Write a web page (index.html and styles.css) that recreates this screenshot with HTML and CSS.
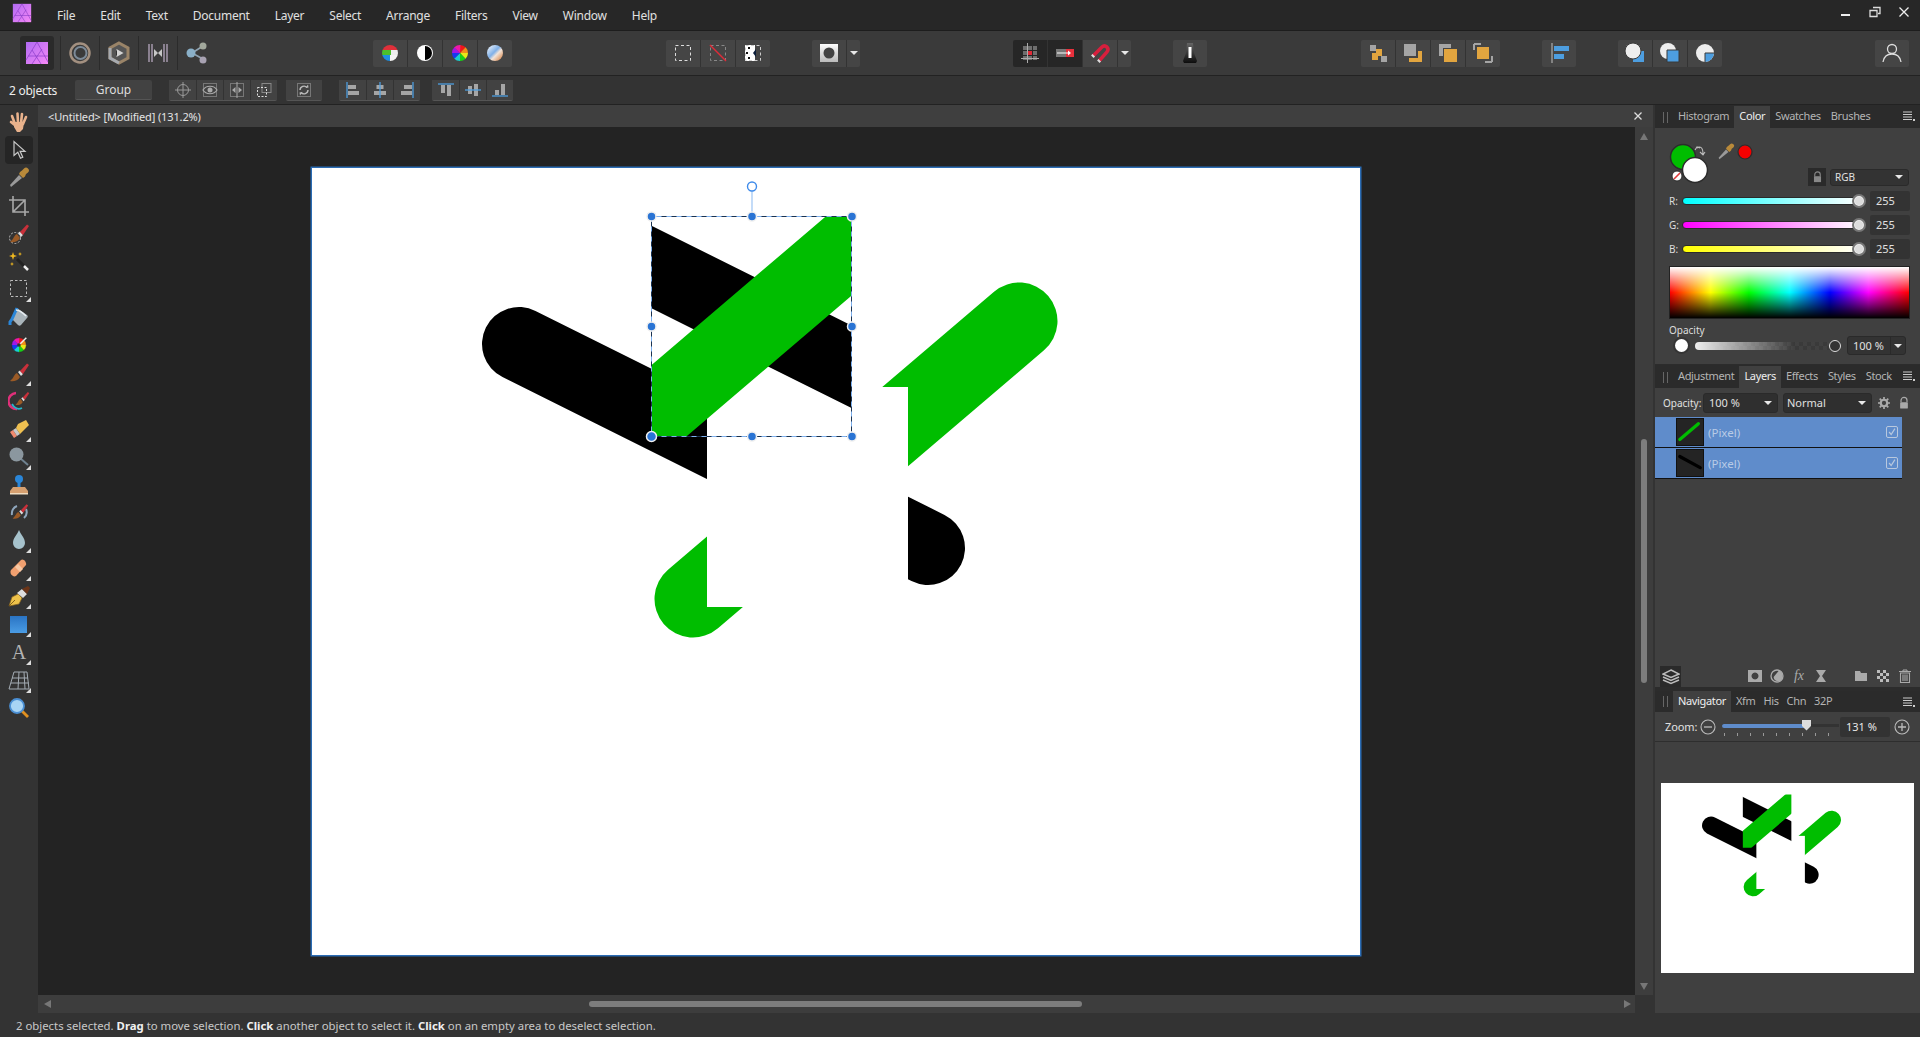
FILE: index.html
```html
<!DOCTYPE html>
<html lang="en">
<head>
<meta charset="utf-8">
<title>Affinity Photo</title>
<link rel="stylesheet" href="styles.css">
</head>
<body>
<svg class="defs" xmlns="http://www.w3.org/2000/svg">
  <defs>
    <linearGradient id="lg-logo" x1="0" y1="0" x2="1" y2="1"><stop offset="0" stop-color="#b06af2"/><stop offset="1" stop-color="#f688f6"/></linearGradient>
    <linearGradient id="lg-tone" x1="0" y1="0" x2="1" y2="1"><stop offset="0" stop-color="#ffffff"/><stop offset=".45" stop-color="#7fb0e8"/><stop offset=".6" stop-color="#f3e4d8"/><stop offset="1" stop-color="#d2722c"/></linearGradient>
    <linearGradient id="lg-mask" x1="0" y1="0" x2="0" y2="1"><stop offset="0" stop-color="#fff"/><stop offset="1" stop-color="#bbb"/></linearGradient>
    <linearGradient id="lg-rect" x1="0" y1="0" x2="0" y2="1"><stop offset="0" stop-color="#2a74c4"/><stop offset="1" stop-color="#4a9ce4"/></linearGradient>
    <linearGradient id="lg-lift" x1="0" y1="0" x2="0" y2="1"><stop offset="0" stop-color="#666"/><stop offset="1" stop-color="#0c0c0c"/></linearGradient>
    <clipPath id="cp-c"><circle cx="12" cy="12" r="8"/></clipPath>
    <clipPath id="cp-piece"><rect x="707" y="387" width="201" height="220"/></clipPath>
  </defs>

  <symbol id="logo" viewBox="0 0 24 24">
    <rect x="1" y="1" width="22" height="22" fill="url(#lg-logo)"/>
    <path d="M12 1 1 19M12 1l11 20M3 15h20M7 9l9 14M17 8 7 23" fill="none" stroke="#8a3cc8" stroke-width=".7"/>
  </symbol>
  <symbol id="art" viewBox="312 168 1048 787">
    <rect x="312" y="168" width="1048" height="787" fill="#fff"/>
    <path d="M519 344 928 548" stroke="#000" stroke-width="74" stroke-linecap="round" fill="none"/>
    <path d="M693 599 1019 321" stroke="#00bd00" stroke-width="77" stroke-linecap="round" fill="none"/>
    <rect x="707" y="387" width="201" height="220" fill="#fff"/>
    <g transform="translate(-56 -171)">
      <g clip-path="url(#cp-piece)">
        <path d="M519 344 928 548" stroke="#000" stroke-width="74" stroke-linecap="round" fill="none"/>
        <path d="M693 599 1019 321" stroke="#00bd00" stroke-width="77" stroke-linecap="round" fill="none"/>
      </g>
    </g>
  </symbol>
  <symbol id="wheel" viewBox="0 0 24 24">
    <g fill="none" stroke-width="8" stroke-dasharray="3.300 22">
      <circle cx="12" cy="12" r="4" stroke="#f01818" pathLength="25" transform="rotate(-90 12 12)"/>
      <circle cx="12" cy="12" r="4" stroke="#f09018" pathLength="25" transform="rotate(-45 12 12)"/>
      <circle cx="12" cy="12" r="4" stroke="#e8e818" pathLength="25" transform="rotate(0 12 12)"/>
      <circle cx="12" cy="12" r="4" stroke="#18d018" pathLength="25" transform="rotate(45 12 12)"/>
      <circle cx="12" cy="12" r="4" stroke="#18d0d0" pathLength="25" transform="rotate(90 12 12)"/>
      <circle cx="12" cy="12" r="4" stroke="#1838f0" pathLength="25" transform="rotate(135 12 12)"/>
      <circle cx="12" cy="12" r="4" stroke="#a018e8" pathLength="25" transform="rotate(180 12 12)"/>
      <circle cx="12" cy="12" r="4" stroke="#f018a8" pathLength="25" transform="rotate(225 12 12)"/>
    </g>
  </symbol>
  <symbol id="dropper" viewBox="0 0 22 22">
    <path d="M3 20 2 18 11 8l3 3z" fill="#9a9a9a"/>
    <path d="M11 7l4 4 2-1.500 1-2.500 2-1.500a2.500 2.500 0 0 0-4-4L14 3.500 12 5z" fill="#b98a3a"/>
  </symbol>
  <symbol id="brushhead" viewBox="0 0 22 22">
    <path d="M2 19c3 1 8 0 10-4l-3-4c-3 1-3 5-7 8z" fill="#9a5a26"/>
    <path d="m10 10 3 4 2-2-3-3.500z" fill="#ddd"/>
    <path d="m12 9 3 3 6-9-2-1.500z" fill="#c9303a"/>
  </symbol>
</svg>

<div class="app">
  <header class="menubar">
    <svg class="applogo"><use href="#logo"/></svg>
    <nav class="menu">
      <span>File</span><span>Edit</span><span>Text</span><span>Document</span><span>Layer</span><span>Select</span><span>Arrange</span><span>Filters</span><span>View</span><span>Window</span><span>Help</span>
    </nav>
    <div class="winctl">
      <svg viewBox="0 0 12 12"><path d="M1 8h9v2H1z" fill="#eee"/></svg>
      <svg viewBox="0 0 12 12"><path d="M4 1.500h7v6H9M1 4.500h7v6H1z" fill="none" stroke="#ddd" stroke-width="1.300"/></svg>
      <svg viewBox="0 0 12 12"><path d="m1.500 1.500 9 9m0-9-9 9" stroke="#eee" stroke-width="1.300"/></svg>
    </div>
  </header>

  <section class="toolbar">
    <div class="persona active"><svg class="i24"><use href="#logo"/></svg></div>
    <div class="persona"><svg class="i24" viewBox="0 0 24 24"><circle cx="12" cy="12" r="9.500" fill="none" stroke="#a39080" stroke-width="2.500"/><circle cx="12.500" cy="12" r="6" fill="none" stroke="#7c8a98" stroke-width="2"/></svg></div>
    <div class="persona"><svg class="i24" viewBox="0 0 24 24"><path d="m12 2 9 5v10l-9 5-9-5V7z" fill="#555" stroke="#9a8468" stroke-width="3"/><path d="M3 7v10l9 5" fill="none" stroke="#a6aab0" stroke-width="3"/><path d="m9.500 8 7 4-7 4z" fill="#d4d4d4"/><path d="M9.500 9.500v5" stroke="#333" stroke-width="1"/></svg></div>
    <div class="persona"><svg class="i24" viewBox="0 0 24 24"><path d="M3 3v18M6 3v18M18 3v18M21 3v18" stroke="#9f93a6" stroke-width="1.600"/><path d="m8 8 4 4-4 4zM16 8l-4 4 4 4z" fill="#c7c7c7"/></svg></div>
    <div class="persona"><svg class="i24" viewBox="0 0 24 24"><path d="M7 12 18 5M7 12l11 6" stroke="#8fa3b2" stroke-width="1.600"/><circle cx="6" cy="12" r="4.500" fill="#8ab0c8"/><circle cx="18" cy="5" r="3.500" fill="#a2a89c"/><circle cx="18" cy="19" r="3.500" fill="#a8a2b2"/></svg></div>

    <div class="group g-color">
      <button class="tbtn"><svg class="i24" viewBox="0 0 24 24"><g clip-path="url(#cp-c)"><path d="M4 4h16v5H4z" fill="#e0303a"/><path d="M4 9h9v5H4z" fill="#4cc02c"/><path d="M13 9h7v5h-7z" fill="#eee"/><path d="M4 14h8v6H4z" fill="#1f8fe0"/><path d="M12 14h8v6h-8z" fill="#f4f4f4"/></g></svg></button>
      <button class="tbtn"><svg class="i24" viewBox="0 0 24 24"><circle cx="12" cy="12" r="8" fill="#fff"/><path d="M12 5a7 7 0 0 1 0 14z" fill="#000"/></svg></button>
      <button class="tbtn"><svg class="i24"><use href="#wheel"/></svg></button>
      <button class="tbtn"><svg class="i24" viewBox="0 0 24 24"><circle cx="12" cy="12" r="8" fill="url(#lg-tone)"/></svg></button>
    </div>

    <div class="group g-sel">
      <button class="tbtn"><svg class="i24" viewBox="0 0 24 24"><rect x="4.500" y="4.500" width="15" height="15" fill="none" stroke="#ddd" stroke-dasharray="3 2.500"/></svg></button>
      <button class="tbtn"><svg class="i24" viewBox="0 0 24 24"><rect x="4.500" y="4.500" width="15" height="15" fill="none" stroke="#888" stroke-dasharray="3 2.500"/><path d="m4 4 16 16" stroke="#e02a38" stroke-width="1.500"/></svg></button>
      <button class="tbtn"><svg class="i24" viewBox="0 0 24 24"><path d="M4 4h10v16H4z" fill="#fff"/><rect x="4.500" y="4.500" width="15" height="15" fill="none" stroke="#ccc" stroke-dasharray="3 2.500"/><path d="M7 6h2v2H7zM7 16h2v2H7zM5 11h2v2H5z" fill="#111"/><path d="M15 8v8l-3-4z" fill="#0c1e3a"/></svg></button>
    </div>

    <div class="group g-mask">
      <button class="tbtn"><svg class="i24" viewBox="0 0 24 24"><rect x="3" y="3" width="18" height="18" fill="url(#lg-mask)"/><circle cx="12" cy="12" r="5.500" fill="#444"/></svg></button>
      <button class="tbtn drop"><i class="caret"></i></button>
    </div>

    <div class="group g-snap">
      <button class="tbtn on"><svg class="i24" viewBox="0 0 24 24"><path d="M5 5h4v4H5zM10 5h4v4h-4zM15 5h4v4h-4zM5 10h4v4H5zM15 10h4v4h-4zM5 15h4v4H5zM10 15h4v4h-4zM15 15h4v4h-4z" fill="#6e6e6e"/><path d="M10 10h4v4h-4z" fill="#e02a38"/><path d="M9.500 2v20M3 17.500h18" stroke="#aaa"/></svg></button>
      <button class="tbtn on"><svg class="i24" viewBox="0 0 24 24"><rect x="3" y="8" width="10" height="8" fill="#777"/><rect x="13" y="8" width="8" height="8" fill="#e8303c"/><path d="M4 12h12" stroke="#fff" stroke-width="1.200"/><path d="m15 9.500 3 2.500-3 2.500z" fill="#fff"/></svg></button>
      <button class="tbtn"><svg class="i24" viewBox="0 0 24 24"><path d="M5 15 14 6c3-3 8 1 5 5l-8 9" fill="none" stroke="#d81f3d" stroke-width="3.500"/><path d="m3.800 13.800 2.500 2.500M9.800 18.800l2.500 2.500" stroke="#ddd" stroke-width="2"/></svg></button>
      <button class="tbtn drop"><i class="caret"></i></button>
    </div>

    <div class="group g-lift">
      <button class="tbtn"><svg class="i24" viewBox="0 0 24 24"><path d="M9 2h6l1 10 3 8-1 2H6l-1-2 3-8z" fill="url(#lg-lift)"/><rect x="10.500" y="6" width="3" height="11" fill="#fff"/></svg></button>
    </div>

    <div class="group g-order">
      <button class="tbtn"><svg class="i24" viewBox="0 0 24 24"><path d="M4 4h6v6H4zM15 15h6v6h-6z" fill="#a5a5a5"/><path d="M10 8h6v7h-4v4H6v-7h4z" fill="#e2a53f"/></svg></button>
      <button class="tbtn"><svg class="i24" viewBox="0 0 24 24"><path d="M3 3h12v12H3z" fill="#a5a5a5"/><path d="M17 10h4v11H8v-4h9z" fill="#e2a53f"/></svg></button>
      <button class="tbtn"><svg class="i24" viewBox="0 0 24 24"><path d="M3 3h12v4H7v8H3z" fill="#a5a5a5"/><path d="M8 8h13v13H8z" fill="#e2a53f"/></svg></button>
      <button class="tbtn"><svg class="i24" viewBox="0 0 24 24"><path d="M3 3v6M3 3h7M21 21v-6M21 21h-7" stroke="#a5a5a5" stroke-width="2" fill="none"/><path d="M6 6h12v12H6z" fill="#e2a53f"/></svg></button>
    </div>

    <div class="group g-align">
      <button class="tbtn"><svg class="i24" viewBox="0 0 24 24"><path d="M5 2v20" stroke="#999" stroke-width="1.500"/><path d="M7 5h15v5H7zM7 13h10v5H7z" fill="#4d9ee0"/></svg></button>
    </div>

    <div class="group g-bool">
      <button class="tbtn"><svg class="i24" viewBox="0 0 24 24"><path d="M10 10h11v11H10z" fill="#4d9ee0"/><circle cx="10" cy="10" r="8" fill="#eee" stroke="#3a3a3a"/></svg></button>
      <button class="tbtn"><svg class="i24" viewBox="0 0 24 24"><circle cx="10" cy="10" r="8" fill="#eee"/><path d="M9 9h12v12H9z" fill="#4d9ee0" stroke="#3a3a3a"/></svg></button>
      <button class="tbtn"><svg class="i24" viewBox="0 0 24 24"><circle cx="12" cy="12" r="9" fill="#eee"/><path d="M12 12h9a9 9 0 0 1-9 9z" fill="#4d9ee0"/><path d="M12 12h9M12 12v9" stroke="#3a3a3a"/></svg></button>
    </div>

    <div class="group g-user">
      <button class="tbtn"><svg class="i24" viewBox="0 0 24 24"><circle cx="12" cy="8" r="4.500" fill="none" stroke="#ddd" stroke-width="1.300"/><path d="M3 21c1-6 5-8 9-8s8 2 9 8" fill="none" stroke="#ddd" stroke-width="1.300"/></svg></button>
    </div>
  </section>

  <section class="context">
    <span class="ctx-label">2 objects</span>
    <button class="cbtn group-btn">Group</button>
    <div class="cgroup g-c1">
      <button class="cbtn"><svg class="i18" viewBox="0 0 18 18"><circle cx="9" cy="9" r="5.500" fill="none" stroke="#999"/><path d="M9 1v16M1 9h16" stroke="#999"/></svg></button>
      <button class="cbtn"><svg class="i18" viewBox="0 0 18 18"><rect x="2.500" y="2.500" width="13" height="13" fill="none" stroke="#777"/><path d="M2 9c3-5 11-5 14 0-3 5-11 5-14 0z" fill="none" stroke="#aaa" stroke-width="1.200"/><circle cx="9" cy="9" r="2.500" fill="#aaa"/></svg></button>
      <button class="cbtn"><svg class="i18" viewBox="0 0 18 18"><rect x="2.500" y="2.500" width="13" height="13" fill="none" stroke="#777"/><path d="M9 1v16" stroke="#aaa"/><path d="m7.500 6v6L4 9zM10.500 6v6L14 9z" fill="#aaa"/></svg></button>
      <button class="cbtn"><svg class="i18" viewBox="0 0 18 18"><rect x="7" y="2.500" width="9" height="9" fill="none" stroke="#888"/><rect x="2.500" y="6.500" width="9" height="9" fill="none" stroke="#ddd" stroke-dasharray="2 1.500"/></svg></button>
    </div>
    <div class="cgroup g-c2">
      <button class="cbtn wide"><svg class="i18" viewBox="0 0 18 18"><rect x="2.500" y="2.500" width="13" height="13" fill="none" stroke="#777"/><path d="M5 9a4 4 0 0 1 7-2.500M13 9a4 4 0 0 1-7 2.500" fill="none" stroke="#bbb" stroke-width="1.400"/><path d="m10.500 7 3-.5-.5-3zM7.500 11l-3 .5.5 3z" fill="#bbb"/></svg></button>
    </div>
    <div class="cgroup g-c3">
      <button class="cbtn"><svg class="i18" viewBox="0 0 18 18"><path d="M3 1v16" stroke="#4d9ee0" stroke-width="1.300"/><path d="M4 4h8v4H4zM4 10h11v4H4z" fill="#a5a5a5"/></svg></button>
      <button class="cbtn"><svg class="i18" viewBox="0 0 18 18"><path d="M5.500 4h7v4h-7zM3 10h12v4H3z" fill="#a5a5a5"/><path d="M9 1v16" stroke="#4d9ee0" stroke-width="1.300"/></svg></button>
      <button class="cbtn"><svg class="i18" viewBox="0 0 18 18"><path d="M15 1v16" stroke="#4d9ee0" stroke-width="1.300"/><path d="M6 4h8v4H6zM3 10h11v4H3z" fill="#a5a5a5"/></svg></button>
    </div>
    <div class="cgroup g-c4">
      <button class="cbtn"><svg class="i18" viewBox="0 0 18 18"><path d="M1 3h16" stroke="#4d9ee0" stroke-width="1.300"/><path d="M4 4h4v8H4zM10 4h4v11h-4z" fill="#a5a5a5"/></svg></button>
      <button class="cbtn"><svg class="i18" viewBox="0 0 18 18"><path d="M4 5h4v8H4zM10 3h4v12h-4z" fill="#a5a5a5"/><path d="M1 9h16" stroke="#4d9ee0" stroke-width="1.300"/></svg></button>
      <button class="cbtn"><svg class="i18" viewBox="0 0 18 18"><path d="M1 15h16" stroke="#4d9ee0" stroke-width="1.300"/><path d="M4 9h4v5H4zM10 3h4v11h-4z" fill="#a5a5a5"/></svg></button>
    </div>
  </section>

  <div class="main">
    <aside class="tools">
      <div class="tool"><svg class="i22" viewBox="0 0 22 22"><g stroke="#e9b28c" stroke-width="2.600" stroke-linecap="round"><path d="M7 13 4 5M10 12 9.500 2.500M13 12l1-9M15 13l3-7M8 15l-5-4"/></g><path d="M6 11h10l-1 7-3 3H9l-3-5z" fill="#e9b28c"/></svg></div>
      <div class="tool sel"><svg class="i22" viewBox="0 0 22 22"><path d="M6 2.500v14l3.800-3.200 2.700 6 2.300-1-2.700-6H17z" fill="#2a2a2a" stroke="#c8c8c8" stroke-width="1.200"/></svg></div>
      <div class="tool"><svg class="i22"><use href="#dropper"/></svg></div>
      <div class="tool"><svg class="i22" viewBox="0 0 22 22"><path d="M5 1v16h16M1 5h16v16M5 17 17 5" fill="none" stroke="#a8a8a8" stroke-width="1.600"/></svg></div>
      <div class="tool"><svg class="i22" viewBox="0 0 22 22"><circle cx="7" cy="15" r="5.500" fill="none" stroke="#bbb" stroke-dasharray="2 1.500"/><use href="#brushhead" width="22" height="22"/></svg></div>
      <div class="tool"><svg class="i22" viewBox="0 0 22 22"><path d="m9 9 10 10" stroke="#222" stroke-width="3"/><path d="m16 16 4 4" stroke="#eee" stroke-width="2.500"/><path d="M5 2l1 3 3 1-3 1-1 3-1-3-3-1 3-1zM12 2l.6 1.500L14 4l-1.400.5L12 6l-.6-1.500L10 4l1.400-.5zM4 12l.6 1.500L6 14l-1.400.5L4 16l-.6-1.500L2 14l1.400-.5z" fill="#efb820"/></svg></div>
      <div class="tool more"><svg class="i22" viewBox="0 0 22 22"><rect x="2.500" y="2.500" width="16" height="16" fill="none" stroke="#bbb" stroke-dasharray="2.500 2"/></svg></div>
      <div class="tool"><svg class="i22" viewBox="0 0 22 22"><path d="M9 2 19 9c1 1 1 2 0 3l-6 7c-1 1-2 1-3 0L4 13z" fill="#a9b4ba"/><path d="M9 2 4 13 2 16v3" fill="none" stroke="#2a86d8" stroke-width="3"/><path d="M8 4c3 0 8 4 10 6" stroke="#e8eef2" stroke-width="1.500" fill="none"/></svg></div>
      <div class="tool"><svg class="i22" viewBox="0 0 24 24"><use href="#wheel" width="24" height="24"/><circle cx="12" cy="12" r="8" fill="none" stroke="#2a2a2a" stroke-width=".6"/><path d="m12 12 8-8" stroke="#eee" stroke-width="1.600"/><circle cx="12" cy="12" r="2" fill="#333"/></svg></div>
      <div class="tool more"><svg class="i22"><use href="#brushhead"/></svg></div>
      <div class="tool"><svg class="i22" viewBox="0 0 22 22"><path d="M8 3a8 8 0 0 0 1 16" fill="none" stroke="#e0307a" stroke-width="2.500"/><path d="M4 14c2 4 6 6 10 4" fill="none" stroke="#28b4c8" stroke-width="1.800"/><use href="#brushhead" width="16" height="16" x="6" y="1"/></svg></div>
      <div class="tool more"><svg class="i22" viewBox="0 0 22 22"><path d="m2 14 4 6 3-2-4-6z" fill="#f08a6e"/><path d="m5 12 4 6 3-2-4-6z" fill="#c8c8c8"/><path d="m8 10 4 6 9-9-3-5-8 4z" fill="#efc050"/></svg></div>
      <div class="tool more"><svg class="i22" viewBox="0 0 22 22"><path d="m12 12 8 7" stroke="#6f8290" stroke-width="2"/><circle cx="8.500" cy="8.500" r="7" fill="#8b979f"/></svg></div>
      <div class="tool"><svg class="i22" viewBox="0 0 22 22"><circle cx="11" cy="5" r="4" fill="#2a86d8"/><path d="M9.500 6h3v8h-3z" fill="#2a86d8"/><path d="M5 13h12l3 4v2H2v-2z" fill="#d6a070"/><path d="M2 19h18v1.500H2z" fill="#f0dcc0"/></svg></div>
      <div class="tool"><svg class="i22" viewBox="0 0 22 22"><path d="M4 14a8 8 0 0 1 5-9M18 8a8 8 0 0 1-2 9" fill="none" stroke="#8fa6bc" stroke-width="2"/><use href="#brushhead" width="18" height="18" x="3" y="2"/></svg></div>
      <div class="tool more"><svg class="i22" viewBox="0 0 22 22"><path d="M11 1c2 5 6 8 6 13a6 6 0 0 1-12 0c0-5 4-8 6-13z" fill="#a6c2cc"/></svg></div>
      <div class="tool more"><svg class="i22" viewBox="0 0 22 22"><path d="m3 13 10-10c2-2 6 2 5 5L8 19c-3 2-7-3-5-6z" fill="#f0a070"/><path d="m7 10 5 5 3-3-5-5z" fill="#f7c8a4"/></svg></div>
      <div class="tool more"><svg class="i22" viewBox="0 0 22 22"><path d="m1 21 3-9 6-3 4 4-3 6z" fill="#eec24a" stroke="#8a6420" stroke-width=".7"/><path d="m1 21 6-6" stroke="#6a4a10" stroke-width=".8"/><path d="m9 8 6 5 4-4-5-5z" fill="#ddd"/><path d="m14 4 5 5 3-6-2-2z" fill="#6a3418"/></svg></div>
      <div class="tool more"><svg class="i22" viewBox="0 0 22 22"><rect x="2" y="3" width="17" height="17" fill="url(#lg-rect)"/></svg></div>
      <div class="tool more"><span class="tool-a">A</span></div>
      <div class="tool more"><svg class="i22" viewBox="0 0 22 22"><path d="M6 3h13l2 17H1zM11 3l-1 17M16 3l1 17M4 9h16M3 14h18" fill="none" stroke="#a4acb4"/></svg></div>
      <div class="tool"><svg class="i22" viewBox="0 0 22 22"><path d="m13 13 7 7" stroke="#e09020" stroke-width="2.800"/><circle cx="9" cy="9" r="7" fill="#a8d4f4" stroke="#4a8fd4" stroke-width="1.800"/></svg></div>
    </aside>

    <div class="center">
      <div class="doctab"><span>&lt;Untitled&gt; [Modified] (131.2%)</span><svg class="tabx" viewBox="0 0 10 10"><path d="m1.500 1.500 7 7m0-7-7 7" stroke="#ddd" stroke-width="1.300"/></svg></div>
      <div class="viewrow">
        <svg class="canvas" viewBox="38 127 1597 868">
          <rect x="311.500" y="167.500" width="1049" height="788" fill="none" stroke="#2b6cb4" stroke-width="2"/>
          <use href="#art" x="312" y="168" width="1048" height="787"/>
          <path d="M752 186v30" stroke="#9cc4f4" stroke-width="1.200"/>
          <circle cx="752" cy="186.500" r="4.500" fill="#fff" stroke="#3f8bea" stroke-width="1.400"/>
          <rect x="651.500" y="216.500" width="200" height="220" fill="none" stroke="#7db0ee"/>
          <rect x="651.500" y="216.500" width="200" height="220" fill="none" stroke="#1c3350" stroke-dasharray="5 5"/>
          <g fill="#2a74d4" stroke="#f0f0f0" stroke-width="1.500">
            <circle cx="651.500" cy="216.500" r="4.500"/><circle cx="752" cy="216.500" r="4.500"/><circle cx="852" cy="216.500" r="4.500"/>
            <circle cx="651.500" cy="326.500" r="4.500"/><circle cx="852" cy="326.500" r="4.500"/>
            <circle cx="651.500" cy="436.500" r="5"/><circle cx="752" cy="436.500" r="4.500"/><circle cx="852" cy="436.500" r="4.500"/>
          </g>
        </svg>
        <div class="vscroll"><i class="arr-up"></i><i class="vthumb"></i><i class="arr-down"></i></div>
      </div>
      <div class="hscroll"><i class="arr-left"></i><i class="hthumb"></i><i class="arr-right"></i></div>
    </div>

    <aside class="panels">
      <div class="tabs t-color">
        <i class="grip"></i><span class="tab">Histogram</span><span class="tab active">Color</span><span class="tab">Swatches</span><span class="tab">Brushes</span>
        <svg class="pmenu" viewBox="0 0 12 10"><path d="M0 1h9M0 3.500h9M0 6h9M0 8.500h9" stroke="#ccc" stroke-width="1.200"/><path d="M10 8h2v2h-2z" fill="#ccc"/></svg>
      </div>
      <div class="pbody colorp">
        <div class="ctop">
          <svg class="wells" viewBox="0 0 90 52">
            <circle cx="14" cy="21" r="12.500" fill="#00bd00" stroke="#2c2c2c" stroke-width="1.500"/>
            <circle cx="26" cy="34" r="12.500" fill="#fff" stroke="#2c2c2c" stroke-width="1.500"/>
            <circle cx="8" cy="40" r="5" fill="#fff" stroke="#2c2c2c"/>
            <path d="m5 43 6-6" stroke="#e03a3a" stroke-width="1.600"/>
            <path d="M28 12c3-2 6-1 6 6M26 14l2-3 3 1M31 16l3 3 2-3" fill="none" stroke="#bbb" stroke-width="1.100"/>
            <use href="#dropper" x="48" y="7" width="18" height="18"/>
            <circle cx="76" cy="16" r="7" fill="#f40000" stroke="#2c2c2c" stroke-width="1.200"/>
          </svg>
          <div class="cmode">
            <span class="lockbtn"><svg class="i14" viewBox="0 0 14 14"><path d="M3.500 6V4a3.500 3.500 0 0 1 7 0v2" fill="none" stroke="#888" stroke-width="1.400"/><rect x="2.500" y="6" width="9" height="7.500" fill="#888"/></svg></span>
            <span class="dd dd-rgb">RGB<i class="caret"></i></span>
          </div>
        </div>
        <div class="srow"><label>R:</label><div class="track tr-r"><i class="knob"></i></div><span class="valbox">255</span></div>
        <div class="srow"><label>G:</label><div class="track tr-g"><i class="knob"></i></div><span class="valbox">255</span></div>
        <div class="srow"><label>B:</label><div class="track tr-b"><i class="knob"></i></div><span class="valbox">255</span></div>
        <div class="spectrum"></div>
        <div class="oplabel">Opacity</div>
        <div class="oprow">
          <i class="opdot"></i>
          <div class="optrack"><i class="opknob"></i></div>
          <span class="opval"><span>100 %</span><b><i class="caret"></i></b></span>
        </div>
      </div>

      <div class="tabs t-layers">
        <i class="grip"></i><span class="tab">Adjustment</span><span class="tab active">Layers</span><span class="tab">Effects</span><span class="tab">Styles</span><span class="tab">Stock</span>
        <svg class="pmenu" viewBox="0 0 12 10"><path d="M0 1h9M0 3.500h9M0 6h9M0 8.500h9" stroke="#ccc" stroke-width="1.200"/><path d="M10 8h2v2h-2z" fill="#ccc"/></svg>
      </div>
      <div class="pbody layersp">
        <div class="lopts">
          <span class="lopl">Opacity:</span>
          <span class="dd dd-op">100 %<i class="caret"></i></span>
          <span class="dd dd-blend">Normal<i class="caret"></i></span>
          <svg class="i14 gear" viewBox="0 0 14 14"><circle cx="7" cy="7" r="3.800" fill="none" stroke="#aaa" stroke-width="2.600"/><path d="M7 0v3M7 11v3M0 7h3M11 7h3M2 2l2 2M10 10l2 2M12 2l-2 2M4 10l-2 2" stroke="#aaa" stroke-width="2"/></svg>
          <svg class="i14" viewBox="0 0 14 14"><path d="M3.500 6V4a3.500 3.500 0 0 1 7 0v2" fill="none" stroke="#aaa" stroke-width="1.400"/><rect x="2.500" y="6" width="9" height="7.500" rx="1" fill="#aaa"/></svg>
        </div>
        <div class="lrow">
          <svg class="lthumb" viewBox="0 0 28 28"><rect width="28" height="28" fill="#242424"/><path d="M3 22 23 5" stroke="#00bd00" stroke-width="3.500" stroke-linecap="round"/></svg>
          <span class="lname">(Pixel)</span><i class="lcheck"><svg viewBox="0 0 12 12"><path d="m2.500 6 2.500 3 4.500-7" fill="none" stroke="#b8c8de" stroke-width="1.500"/></svg></i>
        </div>
        <div class="lrow">
          <svg class="lthumb" viewBox="0 0 28 28"><rect width="28" height="28" fill="#242424"/><path d="M3 7 25 19" stroke="#000" stroke-width="3.500" stroke-linecap="round"/></svg>
          <span class="lname">(Pixel)</span><i class="lcheck"><svg viewBox="0 0 12 12"><path d="m2.500 6 2.500 3 4.500-7" fill="none" stroke="#b8c8de" stroke-width="1.500"/></svg></i>
        </div>
      </div>
      <div class="lbar">
        <span class="lstack"><svg class="i18" viewBox="0 0 18 18"><path d="M9 2 17 6 9 9.500 1 6zM1 9l8 3.500L17 9M1 12l8 3.500 8-3.500" fill="none" stroke="#bbb" stroke-width="1.500"/></svg></span>
        <span class="lbar-icons">
          <svg class="i14" viewBox="0 0 14 14"><path fill-rule="evenodd" d="M0 1h14v12H0zM7 3.500a3.500 3.500 0 1 0 .01 0z" fill="#aaa"/></svg>
          <svg class="i14" viewBox="0 0 14 14"><circle cx="7" cy="7" r="6" fill="none" stroke="#aaa" stroke-width="1.300"/><path d="M9 1.500a6 6 0 0 1 0 11c-4 0-6-3-5-5z" fill="#aaa"/></svg>
          <span class="fx">fx</span>
          <svg class="i14" viewBox="0 0 14 14"><path d="M2 1h10L8 7l4 6H2l4-6z" fill="#aaa"/></svg>
          <svg class="i14 ml" viewBox="0 0 14 14"><path d="M1 2h5l1 2h6v8H1z" fill="#aaa"/></svg>
          <svg class="i14" viewBox="0 0 14 14"><path d="M1 1h3v3H1zM7 1h3v3H7zM4 4h3v3H4zM10 4h3v3h-3zM1 7h3v3H1zM7 7h3v3H7zM4 10h3v3H4zM10 10h3v3h-3z" fill="#bbb"/></svg>
          <svg class="i14" viewBox="0 0 14 14"><path d="M1 2.500h12M5 2V1h4v1" stroke="#aaa" fill="none"/><path d="M2.500 4h9v9.500h-9zM5 5.500v6.500M7 5.500v6.500M9 5.500v6.500" fill="none" stroke="#aaa" stroke-width="1.100"/></svg>
        </span>
      </div>

      <div class="tabs t-nav">
        <i class="grip"></i><span class="tab active">Navigator</span><span class="tab">Xfm</span><span class="tab">His</span><span class="tab">Chn</span><span class="tab">32P</span>
        <svg class="pmenu" viewBox="0 0 12 10"><path d="M0 1h9M0 3.500h9M0 6h9M0 8.500h9" stroke="#ccc" stroke-width="1.200"/><path d="M10 8h2v2h-2z" fill="#ccc"/></svg>
      </div>
      <div class="pbody navp">
        <div class="zoomrow">
          <span class="zlabel">Zoom:</span>
          <svg class="i16" viewBox="0 0 16 16"><circle cx="8" cy="8" r="7" fill="none" stroke="#bbb" stroke-width="1.100"/><path d="M4 8h8" stroke="#bbb" stroke-width="1.300"/></svg>
          <div class="zslider"><i class="zfill"></i><i class="zknob"></i><i class="zticks"></i></div>
          <span class="zval">131 %</span>
          <svg class="i16" viewBox="0 0 16 16"><circle cx="8" cy="8" r="7" fill="none" stroke="#bbb" stroke-width="1.100"/><path d="M4 8h8M8 4v8" stroke="#bbb" stroke-width="1.300"/></svg>
        </div>
        <svg class="thumb"><use href="#art" width="253" height="190"/></svg>
      </div>
    </aside>
  </div>

  <footer class="status">2 objects selected. <b>Drag</b> to move selection. <b>Click</b> another object to select it. <b>Click</b> on an empty area to deselect selection.</footer>
</div>
</body>
</html>
```

FILE: styles.css
```css
* { box-sizing: border-box; }
html, body { margin: 0; padding: 0; }
body {
  width: 1920px; height: 1037px; overflow: hidden;
  background: #333;
  font-family: "Noto Sans", "Open Sans", sans-serif;
  font-size: 12px; color: #ddd;
}
.defs { position: absolute; width: 0; height: 0; }
svg { display: block; flex: none; }
i { display: block; font-style: normal; }
button { font: inherit; color: inherit; border: 0; padding: 0; margin: 0; }

.i24 { width: 24px; height: 24px; }
.i22 { width: 22px; height: 22px; }
.i18 { width: 18px; height: 18px; }
.i16 { width: 16px; height: 16px; }
.i14 { width: 14px; height: 14px; }

.app { display: flex; flex-direction: column; width: 1920px; height: 1037px; }

/* menu */
.menubar {
  height: 31px; flex: none; display: flex; align-items: center;
  background: #272727; border-bottom: 1px solid #1d1d1d;
  padding-left: 12px;
}
.applogo { width: 20px; height: 20px; margin-top: -5px; }
.menu { display: flex; gap: 25px; margin-left: 25px; margin-top: 1px; font-size: 12px; letter-spacing: -.25px; color: #e0e0e0; }
.winctl { margin-left: auto; display: flex; gap: 17px; padding-right: 10px; margin-top: -6px; }
.winctl svg { width: 12px; height: 12px; }

/* toolbar */
.toolbar {
  height: 45px; flex: none; display: flex; align-items: center;
  background: #3a3a3a; border-bottom: 1px solid #222;
  padding-left: 20px;
}
.persona {
  width: 39px; height: 34px; display: flex; align-items: center; justify-content: center;
  border-left: 1px solid #2b2b2b;
}
.persona.active { width: 34px; background: #2a2a2a; border: 0; border-radius: 3px; margin-right: 6px; }
.group { display: flex; height: 27px; border-radius: 2px; overflow: hidden; }
.tbtn {
  width: 35px; height: 27px; background: #454545;
  display: flex; align-items: center; justify-content: center;
  border-left: 1px solid #333;
}
.tbtn:first-child { border-left: 0; width: 34px; }
.tbtn.on { background: #262626; }
.tbtn.drop { width: 14px; }
.caret { width: 0; height: 0; border-left: 4px solid transparent; border-right: 4px solid transparent; border-top: 4px solid #e8e8e8; }
.g-color { margin-left: 157px; }
.g-sel { margin-left: 154px; }
.g-mask { margin-left: 42px; }
.g-snap { margin-left: 153px; }
.g-lift { margin-left: 42px; }
.g-order { margin-left: 154px; }
.g-align { margin-left: 42px; }
.g-bool { margin-left: 42px; }
.g-user { margin-left: 153px; }
.g-lift .tbtn, .g-align .tbtn, .g-user .tbtn { width: 34px; }

/* context */
.context {
  height: 29px; flex: none; display: flex; align-items: center;
  background: #333; border-bottom: 1px solid #222;
  padding-left: 9px; font-size: 12px;
}
.ctx-label { width: 66px; color: #eee; letter-spacing: -.25px; }
.cbtn {
  width: 27px; height: 20px; background: #424242; color: #ddd;
  display: flex; align-items: center; justify-content: center;
  border-left: 1px solid #333;
}
.cbtn:first-child { border-left: 0; }
.group-btn { width: 77px; border: 0; border-radius: 2px; border-bottom: 1px solid #555; font-size: 12px; }
.cbtn.wide { width: 36px; }
.cgroup { display: flex; border-bottom: 1px solid #555; border-radius: 2px; }
.g-c1 { margin-left: 17px; }
.g-c2 { margin-left: 9px; }
.g-c3 { margin-left: 17px; }
.g-c4 { margin-left: 12px; }

/* main */
.main { flex: 1; display: flex; min-height: 0; }
.tools { width: 38px; flex: none; background: #333; padding-top: 3px; }
.tool { position: relative; height: 27.9px; display: flex; align-items: center; justify-content: center; }
.tool.sel { background: #252525; border-radius: 4px; margin: 0 5px; }
.tool.more::after {
  content: ""; position: absolute; right: 7px; bottom: 1px;
  border-left: 5px solid transparent; border-bottom: 5px solid #ddd;
}
.tool-a { font-family: "Liberation Serif", serif; font-size: 20px; color: #b4b4b4; line-height: 1; }

.center { width: 1615px; flex: none; display: flex; flex-direction: column; }
.doctab {
  height: 22px; flex: none; display: flex; align-items: center; justify-content: space-between;
  background: #3f3f3f; padding: 0 10px 0 10px; font-size: 11px; letter-spacing: -.13px; color: #e4e4e4;
}
.tabx { width: 10px; height: 10px; }
.viewrow { flex: 1; display: flex; min-height: 0; }
.canvas { width: 1597px; height: 868px; background: #232323; }
.vscroll { width: 18px; background: #3d3d3d; display: flex; flex-direction: column; align-items: center; position: relative; }
.arr-up { margin-top: 6px; border-left: 4px solid transparent; border-right: 4px solid transparent; border-bottom: 7px solid #777; }
.vthumb { width: 6px; height: 244px; margin-top: 299px; background: #7d7d7d; border-radius: 3px; }
.arr-down { margin-top: auto; margin-bottom: 5px; border-left: 4px solid transparent; border-right: 4px solid transparent; border-top: 7px solid #777; }
.hscroll { height: 18px; flex: none; background: #3d3d3d; display: flex; align-items: center; padding-left: 6px; width: 1597px; }
.arr-left { border-top: 4px solid transparent; border-bottom: 4px solid transparent; border-right: 7px solid #777; }
.hthumb { width: 493px; height: 6px; margin-left: 538px; background: #7d7d7d; border-radius: 3px; }
.arr-right { margin-left: auto; margin-right: 4px; border-top: 4px solid transparent; border-bottom: 4px solid transparent; border-left: 7px solid #777; }

/* panels */
.panels { width: 265px; flex: none; margin-left: 2px; display: flex; flex-direction: column; background: #2c2c2c; }
.tabs {
  flex: none; display: flex; align-items: flex-end; background: #2b2b2b;
  font-size: 11px; letter-spacing: -.35px; color: #b4b4b4; position: relative; padding-left: 18px;
}
.t-color { height: 23px; }
.t-layers { height: 23px; margin-top: 1px; }
.t-nav { height: 21px; }
.grip { position: absolute; left: 8px; top: 7px; width: 5px; height: 11px; border-left: 1px solid #666; border-right: 1px solid #666; }
.t-nav .grip { top: 5px; }
.tab { padding: 0 5px; height: 22px; line-height: 20px; }
.t-nav .tab { height: 21px; line-height: 19px; padding: 0 4px; }
.tab.active { background: #404040; color: #eee; }
.t-nav .tab.active { padding: 0 5px; margin-right: 1px; }
.pmenu { width: 12px; height: 10px; position: absolute; right: 5px; top: 6px; }

.pbody { background: #404040; }
.colorp { height: 236px; flex: none; padding: 0 10px 0 14px; }
.ctop { height: 61px; display: flex; justify-content: space-between; align-items: flex-end; }
.wells { width: 90px; height: 52px; margin-bottom: 1px; }
.cmode { display: flex; align-items: center; gap: 4px; margin-bottom: 3px; margin-right: 1px; }
.lockbtn { width: 18px; height: 18px; background: #2a2a2a; display: flex; align-items: center; justify-content: center; }
.lockbtn svg { width: 11px; height: 12px; }
.dd {
  display: flex; align-items: center; justify-content: space-between;
  background: #333; border: 1px solid #2a2a2a; border-radius: 3px;
  color: #e0e0e0; font-size: 11px; padding: 0 5px 0 4px;
}
.dd-rgb { width: 79px; height: 17px; font-size: 10px; }
.srow { height: 24px; display: flex; align-items: center; }
.srow label { width: 13px; font-size: 10px; color: #ddd; }
.track { position: relative; width: 179px; height: 8px; border-radius: 4px; border: 1px solid #2a2a2a; }
.tr-r { background: linear-gradient(to right, #00ffff, #fff); }
.tr-g { background: linear-gradient(to right, #ff00ff, #fff); }
.tr-b { background: linear-gradient(to right, #ffff00, #fff); }
.knob { position: absolute; right: -6px; top: -4px; width: 14px; height: 14px; border-radius: 50%; background: #ddd; border: 2px solid #777; box-shadow: 0 0 0 1px #eee inset; }
.valbox { margin-left: 9px; width: 40px; height: 20px; background: #333; border-radius: 2px; color: #e0e0e0; font-size: 11px; line-height: 20px; padding-left: 6px; }
.spectrum {
  margin-top: 5px; width: 241px; height: 53px; border: 1px solid #222;
  background:
    linear-gradient(to bottom, #fff 0, rgba(255,255,255,0) 50%, rgba(0,0,0,0) 50%, #000 100%),
    linear-gradient(to right, #f00, #ff0 17%, #0f0 33%, #0ff 50%, #00f 67%, #f0f 83%, #f00);
}
.oplabel { height: 12px; margin-top: 5px; font-size: 10px; line-height: 12px; color: #ddd; }
.oprow { display: flex; align-items: center; height: 19px; }
.opdot { width: 13px; height: 13px; margin-left: 6px; border-radius: 50%; background: #fff; box-shadow: 0 0 0 2px #353535; }
.optrack {
  position: relative; width: 141px; height: 8px; margin-left: 7px; border-radius: 4px;
  background: linear-gradient(to right, #eee, rgba(56,56,56,.85) 70%), repeating-conic-gradient(#777 0 25%, #444 0 50%) 0 0 / 8px 8px;
}
.opknob { position: absolute; right: -5px; top: -2px; width: 12px; height: 12px; border-radius: 50%; background: #333; border: 1px solid #ddd; }
.opval { margin-left: 11px; width: 59px; height: 19px; display: flex; background: #333; border: 1px solid #2a2a2a; border-radius: 3px; font-size: 11px; color: #e0e0e0; line-height: 17px; }
.opval span { flex: 1; padding-left: 5px; }
.opval b { width: 15px; border-left: 1px solid #2a2a2a; display: flex; align-items: center; justify-content: center; }

.layersp { flex: none; height: 277px; }
.lopts { height: 29px; display: flex; align-items: center; padding-left: 8px; background: #404040; }
.lopl { width: 40px; font-size: 10px; color: #e0e0e0; }
.dd-op { width: 75px; height: 20px; padding-left: 5px; background: #2f2f2f; }
.dd-blend { width: 89px; height: 20px; margin-left: 5px; padding-left: 3px; background: #2f2f2f; }
.gear { margin-left: 6px; }
.gear + svg { margin-left: 8px; }
.lopts .gear { width: 12px; height: 12px; }
.lopts .gear + svg { width: 12px; height: 14px; }
.lrow { width: 247px; height: 31px; display: flex; align-items: center; padding-left: 21px; background: #5f8ccb; border-bottom: 1px solid #111; }
.lthumb { width: 28px; height: 28px; border: 1px solid #111; }
.lname { margin-left: 4px; font-size: 11.5px; color: #b9cbe6; }
.lcheck { margin-left: auto; width: 12px; height: 12px; border: 1px solid #b8c8de; border-radius: 2px; margin-right: 4px; }

.lbar { height: 26px; flex: none; display: flex; align-items: flex-start; background: #404040; border-bottom: 4px solid #2c2c2c; padding-left: 5px; }
.lstack { width: 21px; height: 21px; margin-top: 1px; background: #2a2a2a; display: flex; align-items: center; justify-content: center; }
.lbar-icons { display: flex; align-items: center; gap: 8px; height: 22px; margin-left: 67px; }
.lbar-icons svg { width: 14px; height: 14px; }
.lbar-icons .ml { margin-left: 18px; }
.fx { width: 14px; text-align: center; font-family: "Liberation Serif", serif; font-style: italic; font-size: 14px; color: #aaa; line-height: 14px; }

.navp { flex: 1; }
.zoomrow { height: 30px; display: flex; align-items: center; border-bottom: 1px solid #2e2e2e; padding-left: 10px; }
.zlabel { width: 35px; font-size: 11px; letter-spacing: -.1px; color: #e0e0e0; }
.zslider { position: relative; width: 117px; height: 20px; margin-left: 6px; }
.zslider::before { content: ""; position: absolute; left: 0; right: 0; top: 7px; height: 3px; background: #333; }
.zfill { position: absolute; left: 0; top: 7px; width: 85px; height: 4px; background: #5f8ccb; border-radius: 2px; }
.zknob { position: absolute; left: 80px; top: 3px; width: 9px; height: 11px; background: #ddd; clip-path: polygon(0 0, 100% 0, 100% 60%, 50% 100%, 0 60%); }
.zticks { position: absolute; left: 2px; right: 2px; bottom: 1px; height: 3px; background: repeating-linear-gradient(to right, #999 0 1px, transparent 1px 13px); }
.zval { margin-left: 1px; width: 50px; height: 20px; background: #333; border-radius: 2px; font-size: 11px; line-height: 20px; padding-left: 6px; color: #e8e8e8; margin-right: 4px; }
.thumb { width: 253px; height: 190px; margin: 41px 0 0 6px; background: #fff; }

.status { height: 24px; flex: none; background: #333; padding: 3px 0 0 16px; font-size: 11.35px; line-height: 20px; color: #c8c8c8; white-space: pre; }
.status b { color: #f0f0f0; }
```
